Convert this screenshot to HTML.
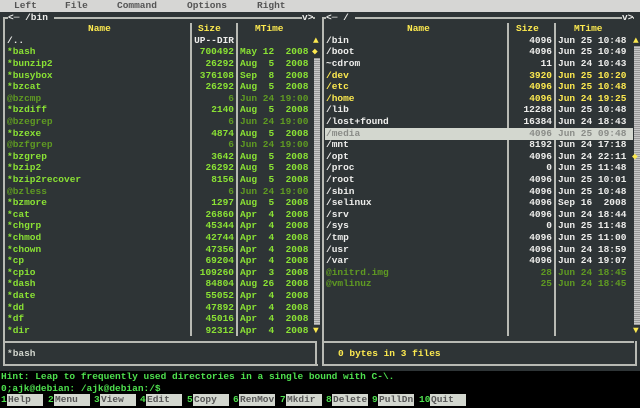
<!DOCTYPE html>
<html><head><meta charset="utf-8"><style>
*{margin:0;padding:0}
body{width:640px;height:408px;overflow:hidden;background:#000;font-family:"Liberation Mono",monospace;font-size:9.5px;font-weight:bold;position:relative}
.a{position:absolute;white-space:pre;line-height:11.6px;height:11.6px}
.r{text-align:right}
.pan{position:absolute;left:0;top:11.6px;width:640px;height:359px;background:#2e3436}
.hl{position:absolute;background:#b8bab4;height:2px}
.vl{position:absolute;background:#b8bab4;width:2px}
.g{color:#8ae234}.d{color:#5f9a22}.w{color:#eeeeec}.y{color:#fce94f}.s{color:#8a8c88}
.sb{position:absolute;width:6px;background:repeating-linear-gradient(0deg,#9a9a9a 0 1px,#c8c8c8 1px 2px)}
.fk{position:absolute;top:394px;height:12px;background:#d3d7cf;color:#555;width:35px;line-height:12px;padding-left:1px}
.fn{position:absolute;top:394px;color:#4ee04e;line-height:12px}
</style></head><body>
<div style="position:absolute;left:0;top:0;width:640px;height:11.6px;background:#d6d6d4"></div>
<div class="a" style="left:14px;top:0;color:#555">Left</div>
<div class="a" style="left:65px;top:0;color:#555">File</div>
<div class="a" style="left:117px;top:0;color:#555">Command</div>
<div class="a" style="left:187px;top:0;color:#555">Options</div>
<div class="a" style="left:257px;top:0;color:#555">Right</div>
<div class="pan"></div>
<div class="hl" style="left:3px;top:17px;width:312px"></div>
<div class="vl" style="left:3px;top:17px;height:349px"></div>
<div class="hl" style="left:3px;top:341px;width:312px"></div>
<div class="hl" style="left:3px;top:364px;width:315px"></div>
<div class="vl" style="left:315px;top:341px;height:25px"></div>
<div class="vl" style="left:190px;top:23px;height:313px"></div>
<div class="vl" style="left:236px;top:23px;height:313px"></div>
<div class="a w" style="left:8px;top:11.6px;background:#2e3436">&lt;─ /bin </div>
<div class="a w" style="left:302px;top:11.6px;background:#2e3436">v&gt;</div>
<div class="sb" style="left:314px;top:58px;height:267px"></div>
<div class="a y" style="left:313px;top:34.8px">▲</div>
<div class="a y" style="left:312px;top:46.4px">◆</div>
<div class="a y" style="left:313px;top:324.8px">▼</div>
<div class="hl" style="left:322px;top:17px;width:312px"></div>
<div class="vl" style="left:322px;top:17px;height:349px"></div>
<div class="hl" style="left:322px;top:341px;width:312px"></div>
<div class="hl" style="left:322px;top:364px;width:315px"></div>
<div class="vl" style="left:635px;top:341px;height:25px"></div>
<div class="vl" style="left:507px;top:23px;height:313px"></div>
<div class="vl" style="left:554px;top:23px;height:313px"></div>
<div class="a w" style="left:326px;top:11.6px;background:#2e3436">&lt;─ / </div>
<div class="a w" style="left:622px;top:11.6px;background:#2e3436">v&gt;</div>
<div class="sb" style="left:634px;top:46px;height:279px"></div>
<div class="a y" style="left:633px;top:34.8px">▲</div>
<div class="a y" style="left:632px;top:150.8px">◆</div>
<div class="a y" style="left:633px;top:324.8px">▼</div>
<div style="position:absolute;left:325px;top:128px;width:308px;height:11.6px;background:#d3d7cf"></div>
<div class="a y" style="left:88px;top:23.2px">Name</div>
<div class="a y" style="left:198px;top:23.2px">Size</div>
<div class="a y" style="left:255px;top:23.2px">MTime</div>
<div class="a y" style="left:407px;top:23.2px">Name</div>
<div class="a y" style="left:516px;top:23.2px">Size</div>
<div class="a y" style="left:574px;top:23.2px">MTime</div>
<div id="L"></div><div id="R"></div>
<div class="a" style="left:7px;top:348px;color:#d3d7cf">*bash</div>
<div class="a y" style="left:338px;top:348px">0 bytes in 3 files</div>
<div class="a" style="left:1px;top:371.2px;color:#4ee04e">Hint: Leap to frequently used directories in a single bound with C-\.</div>
<div class="a" style="left:1px;top:382.8px;color:#4ee04e">0;ajk@debian: /ajk@debian:/$</div>
<div class="fn" style="left:1px">1</div><div class="fk" style="left:7px">Help</div>
<div class="fn" style="left:48px">2</div><div class="fk" style="left:54px">Menu</div>
<div class="fn" style="left:94px">3</div><div class="fk" style="left:100px">View</div>
<div class="fn" style="left:140px">4</div><div class="fk" style="left:146px">Edit</div>
<div class="fn" style="left:187px">5</div><div class="fk" style="left:193px">Copy</div>
<div class="fn" style="left:233px">6</div><div class="fk" style="left:239px">RenMov</div>
<div class="fn" style="left:280px">7</div><div class="fk" style="left:286px">Mkdir</div>
<div class="fn" style="left:326px">8</div><div class="fk" style="left:332px">Delete</div>
<div class="fn" style="left:372px">9</div><div class="fk" style="left:378px">PullDn</div>
<div class="fn" style="left:419px">10</div><div class="fk" style="left:430px">Quit</div>
<script>
var L=[["w","/..","UP--DIR",""],["g","*bash","700492","May 12  2008"],["g","*bunzip2","26292","Aug  5  2008"],["g","*busybox","376108","Sep  8  2008"],["g","*bzcat","26292","Aug  5  2008"],["d","@bzcmp","6","Jun 24 19:00"],["g","*bzdiff","2140","Aug  5  2008"],["d","@bzegrep","6","Jun 24 19:00"],["g","*bzexe","4874","Aug  5  2008"],["d","@bzfgrep","6","Jun 24 19:00"],["g","*bzgrep","3642","Aug  5  2008"],["g","*bzip2","26292","Aug  5  2008"],["g","*bzip2recover","8156","Aug  5  2008"],["d","@bzless","6","Jun 24 19:00"],["g","*bzmore","1297","Aug  5  2008"],["g","*cat","26860","Apr  4  2008"],["g","*chgrp","45344","Apr  4  2008"],["g","*chmod","42744","Apr  4  2008"],["g","*chown","47356","Apr  4  2008"],["g","*cp","69204","Apr  4  2008"],["g","*cpio","109260","Apr  3  2008"],["g","*dash","84804","Aug 26  2008"],["g","*date","55052","Apr  4  2008"],["g","*dd","47892","Apr  4  2008"],["g","*df","45016","Apr  4  2008"],["g","*dir","92312","Apr  4  2008"]];
var R=[["w","/bin","4096","Jun 25 10:48"],["w","/boot","4096","Jun 25 10:49"],["w","~cdrom","11","Jun 24 10:43"],["y","/dev","3920","Jun 25 10:20"],["y","/etc","4096","Jun 25 10:48"],["y","/home","4096","Jun 24 19:25"],["w","/lib","12288","Jun 25 10:48"],["w","/lost+found","16384","Jun 24 18:43"],["s","/media","4096","Jun 25 09:48"],["w","/mnt","8192","Jun 24 17:18"],["w","/opt","4096","Jun 24 22:11"],["w","/proc","0","Jun 25 11:48"],["w","/root","4096","Jun 25 10:01"],["w","/sbin","4096","Jun 25 10:48"],["w","/selinux","4096","Sep 16  2008"],["w","/srv","4096","Jun 24 18:44"],["w","/sys","0","Jun 25 11:48"],["w","/tmp","4096","Jun 25 11:00"],["w","/usr","4096","Jun 24 18:59"],["w","/var","4096","Jun 24 19:07"],["d","@initrd.img","28","Jun 24 18:45"],["d","@vmlinuz","25","Jun 24 18:45"]];
function put(arr,x0,xs,xm){var h="";arr.forEach(function(e,i){var t=(34.8+i*11.6).toFixed(1);var c=e[0];h+='<div class="a '+c+'" style="left:'+x0+'px;top:'+t+'px">'+e[1]+'</div><div class="a r '+c+'" style="left:'+(xs-60)+'px;width:60px;top:'+t+'px">'+e[2]+'</div><div class="a '+c+'" style="left:'+xm+'px;top:'+t+'px">'+e[3]+'</div>';});return h;}
document.getElementById("L").innerHTML=put(L,7,234,240);
document.getElementById("R").innerHTML=put(R,326,552,558);
</script>
</body></html>
